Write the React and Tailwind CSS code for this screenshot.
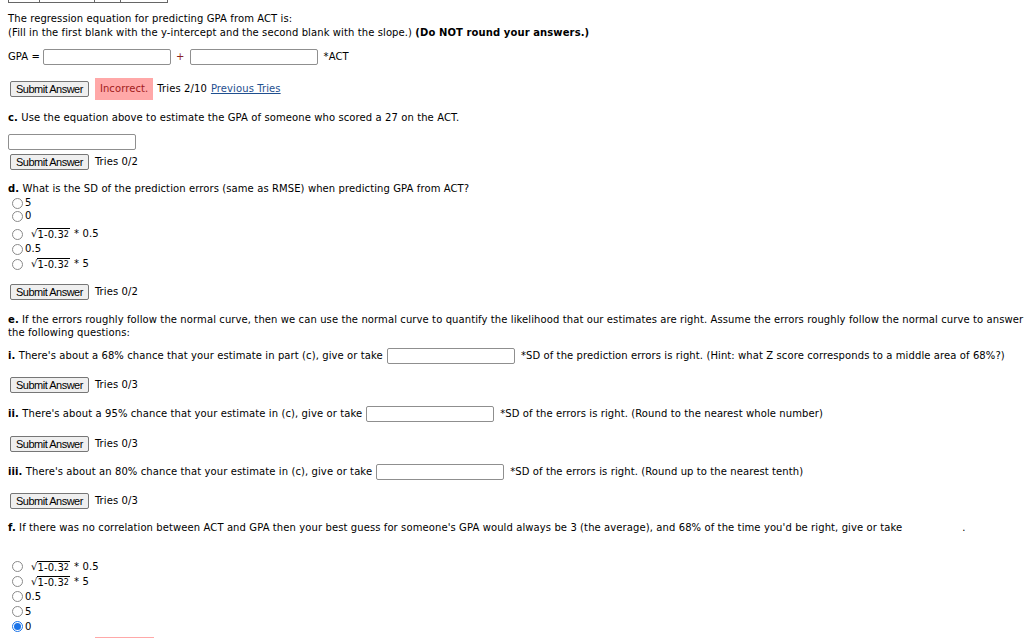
import React from 'react';

const font = "font-['DejaVu_Sans',sans-serif]";

function SubmitButton() {
  return (
    <button className="ml-[2px] h-[16px] px-[5px] border border-[#767676] rounded-[2px] bg-[#efefef] font-['Liberation_Sans',sans-serif] text-[11px] leading-[14px] tracking-[-0.5px] text-black">
      Submit Answer
    </button>
  );
}

function TextBox({ className = '' }) {
  return <input type="text" className={`w-[128px] h-[16px] border border-[#8f8f8f] rounded-[2px] bg-white ${className}`} />;
}

function Sqrt({ times }) {
  return (
    <span className="ml-[6px] inline-flex items-end">
      <span>√</span>
      <span className="border-t border-black leading-[12px] pr-[1px]">
        1-0.3<sup className="text-[8px] relative -top-[1px]">2</sup>
      </span>
      <span className="ml-[4px]">* {times}</span>
    </span>
  );
}

function Radio({ children, checked, className = 'h-[14px]' }) {
  return (
    <div className={`flex items-center ${className}`}>
      {checked ? (
        <span className="ml-[4px] mr-[2px] w-[11px] h-[11px] rounded-full border border-[#1a73e8] flex items-center justify-center">
          <span className="w-[7px] h-[7px] rounded-full bg-[#1a73e8]" />
        </span>
      ) : (
        <span className="ml-[4px] mr-[2px] w-[11px] h-[11px] rounded-full border border-[#8a8a8a] bg-white" />
      )}
      {children}
    </div>
  );
}

function Tries({ n }) {
  return <span className="ml-[6px]">Tries {n}</span>;
}

export default function App() {
  return (
    <div className={`${font} text-[10px] leading-[14px] tracking-[0.1px] text-black bg-white min-h-screen pl-[8px]`}>
      <div className="flex h-[3px]">
        <div className="w-[32px] border-l border-b border-r border-[#666]" />
        <div className="w-[55px] border-b border-r border-[#666]" />
        <div className="w-[26px] border-b border-r border-[#666]" />
        <div className="w-[47px] border-b border-r border-[#666]" />
      </div>

      <p className="mt-[9px]">The regression equation for predicting GPA from ACT is:</p>
      <p>
        (Fill in the first blank with the y-intercept and the second blank with the slope.) <b>(Do NOT round your answers.)</b>
      </p>

      <div className="mt-[9px] flex items-center h-[16px]">
        <span>GPA =</span>
        <TextBox className="ml-[3px]" />
        <span className="mx-[5px] text-[#8a2222]">+</span>
        <TextBox />
        <span className="ml-[6px]">*ACT</span>
      </div>

      <div className="mt-[13px] flex items-center h-[22px]">
        <SubmitButton />
        <span className="ml-[6px] h-[22px] flex items-center px-[5px] bg-[#ffa8a8] text-[#a11a1a]">Incorrect.</span>
        <span className="ml-[4px]">Tries 2/10</span>
        <a href="#" className="ml-[4px] text-[#1f4f8f] underline">Previous Tries</a>
      </div>

      <p className="mt-[11px]"><b>c.</b> Use the equation above to estimate the GPA of someone who scored a 27 on the ACT.</p>
      <TextBox className="mt-[9px] block" />
      <div className="mt-[3px] flex items-center h-[17px]">
        <SubmitButton />
        <Tries n="0/2" />
      </div>

      <p className="mt-[12px]"><b>d.</b> What is the SD of the prediction errors (same as RMSE) when predicting GPA from ACT?</p>
      <Radio>5</Radio>
      <Radio className="h-[14px] -mt-[1px]">0</Radio>
      <Radio className="h-[14px] mt-[4px]"><Sqrt times="0.5" /></Radio>
      <Radio className="h-[14px] mt-[1px]">0.5</Radio>
      <Radio className="h-[14px] mt-[1px]"><Sqrt times="5" /></Radio>
      <div className="mt-[13px] flex items-center h-[16px]">
        <SubmitButton />
        <Tries n="0/2" />
      </div>

      <p className="mt-[13px] leading-[13px]">
        <span className="whitespace-nowrap">
          <b>e.</b> If the errors roughly follow the normal curve, then we can use the normal curve to quantify the likelihood that our estimates are right. Assume the errors roughly follow the normal curve to answer
        </span>
        <br />
        the following questions:
      </p>

      <div className="mt-[9px] flex items-center h-[16px]">
        <span><b>i.</b> There's about a 68% chance that your estimate in part (c), give or take</span>
        <TextBox className="ml-[4px]" />
        <span className="ml-[6px]">*SD of the prediction errors is right. (Hint: what Z score corresponds to a middle area of 68%?)</span>
      </div>
      <div className="mt-[13px] flex items-center h-[16px]">
        <SubmitButton />
        <Tries n="0/3" />
      </div>

      <div className="mt-[13px] flex items-center h-[16px]">
        <span><b>ii.</b> There's about a 95% chance that your estimate in (c), give or take</span>
        <TextBox className="ml-[4px]" />
        <span className="ml-[6px]">*SD of the errors is right. (Round to the nearest whole number)</span>
      </div>
      <div className="mt-[14px] flex items-center h-[16px]">
        <SubmitButton />
        <Tries n="0/3" />
      </div>

      <div className="mt-[12px] flex items-center h-[16px]">
        <span><b>iii.</b> There's about an 80% chance that your estimate in (c), give or take</span>
        <TextBox className="ml-[4px]" />
        <span className="ml-[6px]">*SD of the errors is right. (Round up to the nearest tenth)</span>
      </div>
      <div className="mt-[13px] flex items-center h-[16px]">
        <SubmitButton />
        <Tries n="0/3" />
      </div>

      <p className="mt-[12px]">
        <b>f.</b> If there was no correlation between ACT and GPA then your best guess for someone's GPA would always be 3 (the average), and 68% of the time you'd be right, give or take
        <span className="inline-block w-[60px]" />.
      </p>

      <div className="mt-[24px]">
        <Radio className="h-[15px]"><Sqrt times="0.5" /></Radio>
        <Radio className="h-[15px]"><Sqrt times="5" /></Radio>
        <Radio className="h-[15px]">0.5</Radio>
        <Radio className="h-[15px]">5</Radio>
        <Radio className="h-[15px]" checked>0</Radio>
      </div>

      <div className="mt-[3px] flex items-center h-[22px]">
        <div className="ml-[87px] w-[59px] h-[22px] bg-[#ffa8a8]" />
      </div>
    </div>
  );
}
